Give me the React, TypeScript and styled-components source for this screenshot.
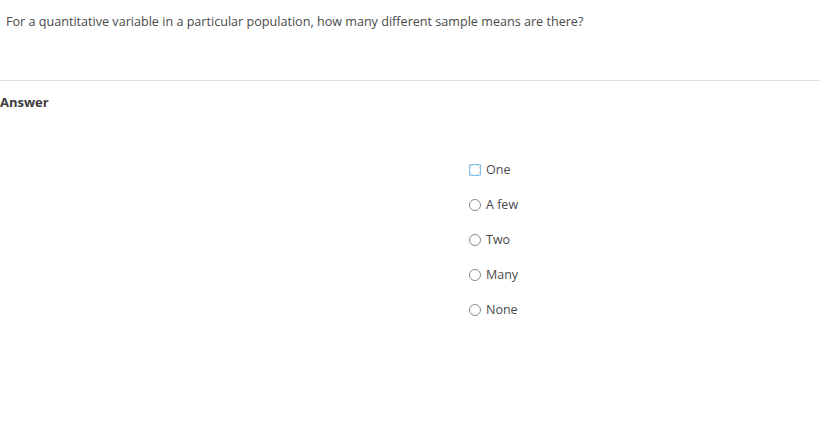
import { ReactElement, useState } from 'react'
import styled, { createGlobalStyle } from 'styled-components'

const options = ['One', 'A few', 'Two', 'Many', 'None']

const App = (): ReactElement => {
  const [selected, setSelected] = useState<string | null>(null)

  return (
    <>
      <GlobalStyle />
      <Page>
        <Question>For a quantitative variable in a particular population, how many different sample means are there?</Question>
        <Divider />
        <AnswerTitle>Answer</AnswerTitle>
        <OptionList>
          {options.map((option, i) => (
            <OptionRow key={option}>
              <Radio
                $focused={i === 0}
                $checked={selected === option}
                onClick={() => setSelected(option)}
              />
              <OptionLabel>{option}</OptionLabel>
            </OptionRow>
          ))}
        </OptionList>
      </Page>
    </>
  )
}

export default App

const GlobalStyle = createGlobalStyle`
  html, body {
    margin: 0;
    padding: 0;
    background: #ffffff;
    font-family: "Open Sans", "Noto Sans", sans-serif;
    color: #494949;
  }
`

const Page = styled.div`
  width: 820px;
  height: 433px;
  display: flex;
  flex-direction: column;
`

const Question = styled.p`
  margin: 13px 0 0 6px;
  font-size: 12.6px;
  line-height: 18px;
  color: #4a4a4a;
`

const Divider = styled.hr`
  margin: 49px 0 0 0;
  border: none;
  border-top: 1px solid #dedede;
  height: 0;
`

const AnswerTitle = styled.h3`
  margin: 12px 0 0 0;
  font-size: 13px;
  line-height: 18px;
  font-weight: 700;
  color: #3d3d3d;
`

const OptionList = styled.div`
  display: flex;
  flex-direction: column;
  gap: 17px;
  margin: 50px 0 0 469px;
`

const OptionRow = styled.label`
  display: flex;
  align-items: center;
  gap: 5px;
  height: 18px;
  cursor: pointer;
`

const Radio = styled.span<{ $focused: boolean; $checked: boolean }>`
  position: relative;
  box-sizing: border-box;
  width: 12px;
  height: 12px;
  border-radius: 50%;
  border: 1px solid ${({ $focused }) => ($focused ? '#c8c8c8' : '#8a8a8a')};
  background: ${({ $checked }) => ($checked ? 'radial-gradient(circle, #333 35%, transparent 40%)' : '#fff')};

  &::before {
    content: '';
    display: ${({ $focused }) => ($focused ? 'block' : 'none')};
    position: absolute;
    inset: -1px;
    border: 1.5px solid #7cc2ee;
    border-radius: 1px;
  }
`

const OptionLabel = styled.span`
  font-size: 12.5px;
  line-height: 18px;
  color: #4a4a4a;
`
